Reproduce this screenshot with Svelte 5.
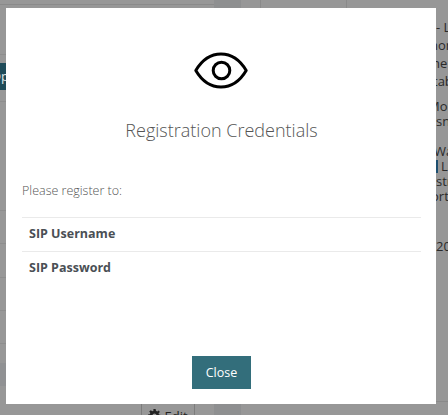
<script>
  const leftRows = [
    { h: 46, line: true }, { h: 8 }, { h: 27, tab: true }, { h: 11, line: true }, { h: 108, line: true },
    { h: 32, line: true }, { h: 33, line: true }, { h: 32, line: true }, { h: 32, line: true }, { h: 19 }, { h: 23, shade: true }
  ];
  const noteGroups = [
    { gap: 10, lh: 18, lines: [{ t: '- Lo', x: 0 }, { t: 'nor', x: -6 }, { t: 'ne', x: -4 }, { t: 'tab', x: -3 }] },
    { gap: 9, lh: 15, lines: [{ t: 'Mol', x: -8 }, { t: 'sn', x: 0 }] },
    { gap: 15, lh: 15, lines: [{ t: 'Wa', x: -2 }, { t: 'La', x: 5, mark: true }, { t: 'str', x: 0 }, { t: 'ort', x: -5 }] },
    { gap: 35, lh: 15, lines: [{ t: '2021', x: 0 }] }
  ];
</script>

<div class="page">
  <div class="top">
    <div class="top-a"></div>
    <div class="shade"></div>
    <div class="top-b"></div>
    <div class="top-c"></div>
    <div class="top-d"></div>
  </div>

  <div class="left">
    {#each leftRows as row}
      <div class="left-row" class:line={row.line} class:tab={row.tab} class:shaded={row.shade} style="height: {row.h}px">{row.tab ? 'Op' : ''}</div>
    {/each}
  </div>

  <div class="modal">
    <svg class="eye" viewBox="0 0 54 37" width="54" height="37" aria-hidden="true">
      <path d="M1.800 18.500C8 8 17 2 27 2s19 6 25.200 16.500C46 29 37 35 27 35S8 29 1.800 18.500Z" fill="none" stroke="#000" stroke-width="3" stroke-linejoin="round"/>
      <circle cx="27.500" cy="18.500" r="8.300" fill="none" stroke="#000" stroke-width="3"/>
    </svg>
    <h2>Registration Credentials</h2>
    <p>Please register to:</p>
    <div class="row">SIP Username</div>
    <div class="row">SIP Password</div>
    <button class="close" type="button">Close</button>
  </div>

  <div class="notes">
    {#each noteGroups as group}
      <div class="group" style="margin-top: {group.gap}px; line-height: {group.lh}px">
        {#each group.lines as line}
          <div class="note" style="margin-left: {line.x}px">{#if line.mark}<i class="mark"></i>{/if}{line.t}</div>
        {/each}
      </div>
    {/each}
    <div class="note-rule"></div>
  </div>

  <div class="bottom">
    <div class="bottom-a"></div>
    <div class="edit">
      <svg viewBox="0 0 14 14" width="13" height="13" aria-hidden="true">
        <path fill-rule="evenodd" d="M5.800 0h2.400l.4 2 1.300.6L11.600 1.500l1.200 1.700-1.400 1.500.4 1.300 2 .4v2.400l-2 .4-.5 1.300 1.300 1.700-1.700 1.200-1.500-1.200-1.300.5-.3 1.900H5.800l-.4-2-1.300-.5-1.700 1.200-1.200-1.700 1.200-1.600-.5-1.300-1.900-.3V6l2-.4.500-1.300-1.200-1.700 1.700-1.200 1.600 1.100 1.300-.5zM7 4.800a2.200 2.200 0 1 0 0 4.400 2.200 2.200 0 0 0 0-4.400z" fill="#222"/>
      </svg>
      Edit
    </div>
    <div class="bottom-b"></div>
    <div class="shade"></div>
  </div>
</div>

<style>
  :global(body) { margin: 0; background: #979797; overflow: hidden; font-family: "Open Sans", sans-serif; }
  .page { width: 448px; height: 415px; overflow: hidden; background: #979797; display: grid; grid-template-columns: 6px 430px 12px; grid-template-rows: 8px 396px 11px; }

  .top { grid-column: 1 / 4; display: flex; height: 8px; }
  .top-a { width: 214px; height: 4px; border-bottom: 1px solid #8a8a8a; box-sizing: content-box; }
  .shade { width: 27px; background: #8e8f90; }
  .top-b { width: 19px; }
  .top-c { width: 85px; border-left: 1px solid #8a8a8a; box-sizing: content-box; }
  .top-d { flex: 1; border-left: 1px solid #8a8a8a; }

  .left { display: flex; flex-direction: column; overflow: hidden; }
  .left-row { flex: none; box-sizing: content-box; }
  .line { border-bottom: 1px solid #8d8d8d; }
  .tab { background: #1f4b59; color: #dfe6e8; font-size: 13px; line-height: 27px; overflow: hidden; white-space: nowrap; text-indent: -9px; }
  .shaded { background: #909193; }

  .modal { background: #fff; box-sizing: border-box; padding: 44px 15px 15px 16px; display: flex; flex-direction: column; }
  .eye { align-self: center; margin-left: -2px; flex: none; }
  h2 { margin: 29px 0 0; font-weight: 300; font-size: 18px; line-height: 25px; color: #555; text-align: center; }
  p { margin: 39px 0 0; font-weight: 300; font-size: 12.500px; line-height: 17px; color: #555; padding-bottom: 18px; }
  .row { border-top: 1px solid #eaeaea; padding: 0 7px; height: 33px; line-height: 31px; font-weight: 700; font-size: 12.500px; color: #4a4f55; }
  .close { margin-top: auto; align-self: center; width: 59px; height: 33px; background: #336e7b; color: #fff; border: 0; font: 400 12.500px "Open Sans", sans-serif; padding: 0; }

  .notes { overflow: hidden; display: flex; flex-direction: column; color: #2a2a2a; font-size: 13px; }
  .note { white-space: nowrap; }
  .mark { display: inline-block; width: 2px; height: 13px; margin: 0 3px -2px -5px; background: #1d4f70; }
  .note-rule { margin-top: auto; margin-bottom: 2px; height: 1px; background: #8a8a8a; }

  .bottom { grid-column: 1 / 4; display: flex; height: 11px; overflow: hidden; }
  .bottom-a { width: 141px; }
  .edit { width: 54px; box-sizing: border-box; border: solid #7c7c7c; border-width: 0 1px; padding-top: 3px; display: flex; gap: 3px; justify-content: center; align-items: flex-start; font-size: 13px; line-height: 18px; color: #222; }
  .edit svg { margin-top: 2px; flex: none; }
  .bottom-b { width: 19px; }
</style>
